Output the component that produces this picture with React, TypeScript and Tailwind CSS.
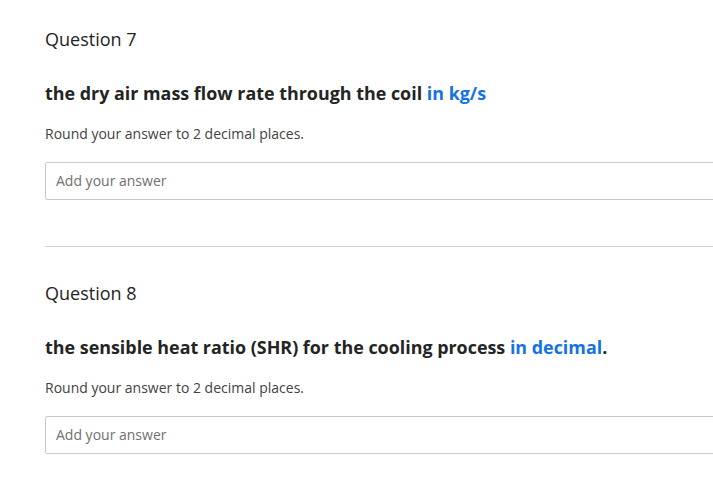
import React from "react";

function Question({ n, title, unit, tail }: { n: number; title: string; unit: string; tail?: string }) {
  return (
    <div className="flex flex-col">
      <div className="text-[18px] leading-[24px] text-[#242424] h-[24px]">Question {n}</div>
      <div className="mt-[30px] text-[17.9px] leading-[24px] font-bold text-[#242424] whitespace-nowrap">
        {title} <span className="text-[#1473e6]">{unit}</span>
        {tail}
      </div>
      <div className="mt-[19px] text-[14px] leading-[19px] text-[#424242] whitespace-nowrap">
        Round your answer to 2 decimal places.
      </div>
      <div className="mt-[19px] h-[38px] w-[720px] border border-[#c8c8c8] rounded-[2px] flex items-center pl-[10px] pb-[1px] text-[14px] text-[#707070]">
        Add your answer
      </div>
    </div>
  );
}

export default function App() {
  return (
    <div className="w-screen h-[497px] overflow-hidden bg-white" style={{ fontFamily: '"Open Sans", sans-serif' }}>
      <div className="pl-[45px] pt-[27px] flex flex-col">
        <Question n={7} title="the dry air mass flow rate through the coil" unit="in kg/s" />
        <div className="mt-[46px] h-px w-[720px] bg-[#d1d1d1]" />
        <div className="mt-[34px]">
          <Question n={8} title="the sensible heat ratio (SHR) for the cooling process" unit="in decimal" tail="." />
        </div>
      </div>
    </div>
  );
}
